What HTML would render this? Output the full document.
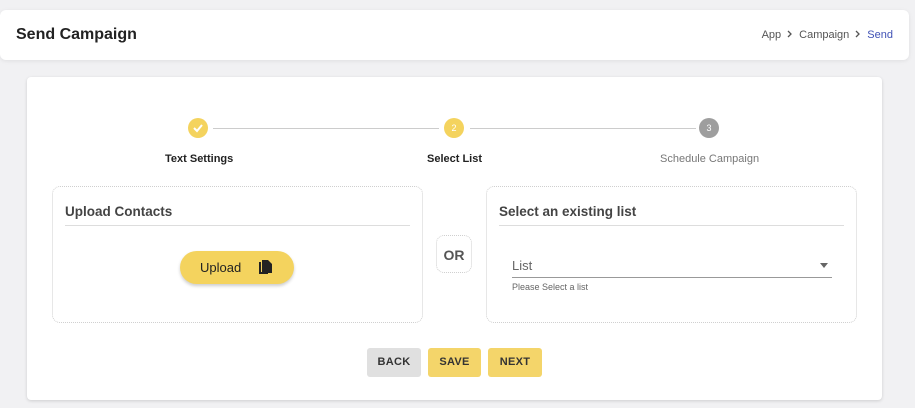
<!DOCTYPE html>
<html><head><meta charset="utf-8"><style>
*{box-sizing:border-box;margin:0;padding:0}
body{width:915px;height:408px;background:#f1f1f3;font-family:"Liberation Sans",Arial,sans-serif;position:relative;overflow:hidden;color:#333}
.hdr{position:absolute;left:0;top:10px;width:909px;height:50px;background:#fff;border-radius:6px;box-shadow:0 1px 4px rgba(0,0,0,.08)}
.hdr h1{position:absolute;left:16px;top:16px;font-size:16px;font-weight:bold;color:#222}
.bc{position:absolute;right:16px;top:19px;font-size:11px;color:#555}
.bc .s{color:#3f51b5}
.bc svg{margin:0 6px;vertical-align:0}
.card{position:absolute;left:27px;top:77px;width:855px;height:323px;background:#fff;border-radius:4px;box-shadow:0 1px 3px rgba(0,0,0,.15)}
.dot{position:absolute;width:20px;height:20px;border-radius:50%;color:#fff;font-size:9px;text-align:center;line-height:20px}
.line{position:absolute;height:1px;background:#ccc;top:128px}
.lbl{position:absolute;top:153px;font-size:11px}
.box{position:absolute;border:1px dotted #cfcfcf;border-radius:8px;background:#fff}
.box h2{position:absolute;left:12px;top:17px;font-size:13.5px;font-weight:bold;color:#444}
.box .rule{position:absolute;left:12px;right:12px;top:38px;height:1px;background:#ddd}
.btn{position:absolute;top:348px;height:29px;border-radius:3px;font-size:11px;text-align:center;line-height:29px;color:#333;letter-spacing:.3px;font-weight:bold}
</style></head><body>
<div class="hdr"><h1>Send Campaign</h1><div class="bc">App<svg width="6" height="8" viewBox="0 0 6 8"><path d="M1 1l3 3-3 3" stroke="#555" stroke-width="1.3" fill="none"/></svg>Campaign<svg width="6" height="8" viewBox="0 0 6 8"><path d="M1 1l3 3-3 3" stroke="#555" stroke-width="1.3" fill="none"/></svg><span class="s">Send</span></div></div>
<div class="card"></div>
<div class="dot" style="left:188px;top:118px;background:#f4d35e"><svg width="12" height="12" viewBox="0 0 12 12" style="margin-top:4px"><path d="M2 6l3 3 5-6" stroke="#fff" stroke-width="2" fill="none"/></svg></div>
<div class="line" style="left:213px;width:226px"></div>
<div class="dot" style="left:444px;top:118px;background:#f4d35e">2</div>
<div class="line" style="left:470px;width:226px"></div>
<div class="dot" style="left:699px;top:118px;background:#9e9e9e">3</div>
<div class="lbl" style="left:165px;font-weight:bold;color:#222">Text Settings</div>
<div class="lbl" style="left:427px;font-weight:bold;color:#222">Select List</div>
<div class="lbl" style="left:660px;color:#777">Schedule Campaign</div>
<div class="box" style="left:52px;top:186px;width:371px;height:137px"><h2>Upload Contacts</h2><div class="rule"></div></div>
<div style="position:absolute;left:180px;top:251px;width:114px;height:33px;border-radius:17px;background:#f4d35e;box-shadow:0 2px 3px rgba(0,0,0,.2);font-size:13px;color:#222">
<span style="position:absolute;left:20px;top:9px">Upload</span>
<svg style="position:absolute;left:78px;top:9px" width="14" height="15" viewBox="0 0 14 15"><path d="M1 2h2v10h7v2H1z" fill="#222"/><path d="M4 0h6l4 4v9H4z" fill="#222"/></svg></div>
<div class="box" style="left:436px;top:235px;width:36px;height:38px;font-size:14px;font-weight:bold;color:#555;text-align:center;line-height:38px">OR</div>
<div class="box" style="left:486px;top:186px;width:371px;height:137px"><h2>Select an existing list</h2><div class="rule"></div>
<div style="position:absolute;left:25px;top:71px;font-size:13px;color:#666">List</div>
<div style="position:absolute;left:333px;top:76px;width:0;height:0;border-left:4px solid transparent;border-right:4px solid transparent;border-top:5px solid #666"></div>
<div style="position:absolute;left:25px;top:90px;width:320px;height:1px;background:#999"></div>
<div style="position:absolute;left:25px;top:95px;font-size:9px;color:#666">Please Select a list</div></div>
<div class="btn" style="left:367px;width:54px;background:#e0e0e0">BACK</div>
<div class="btn" style="left:428px;width:53px;background:#f4d56a">SAVE</div>
<div class="btn" style="left:488px;width:54px;background:#f4d56a">NEXT</div>
</body></html>
